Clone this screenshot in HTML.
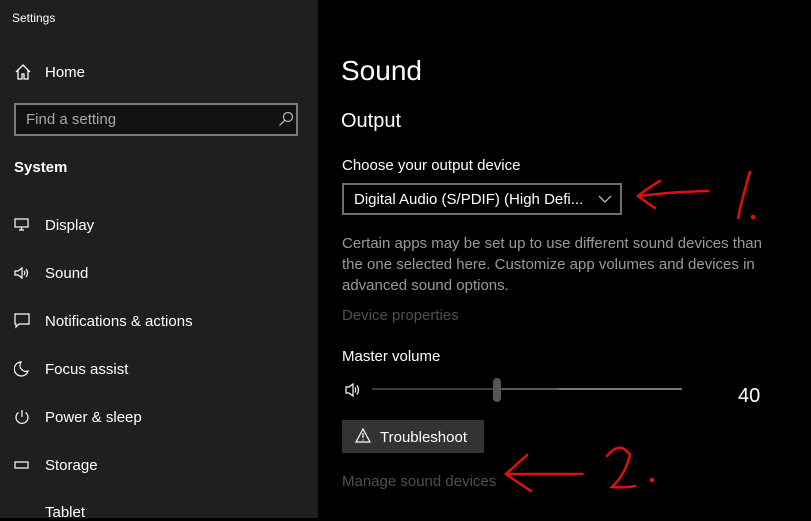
<!DOCTYPE html>
<html><head><meta charset="utf-8"><style>
body{margin:0;width:811px;height:518px;overflow:hidden;background:#000;font-family:"Liberation Sans",sans-serif;color:#fff;position:relative}
.side{position:absolute;left:0;top:0;width:318px;height:518px;background:#1f1f1f}
.t{position:absolute;white-space:nowrap}
.nav{font-size:15px;left:45px}
.ic{position:absolute;left:14px}
</style></head><body>
<div class="side">
<div class="t" style="left:12px;top:11px;font-size:12px">Settings</div>
<svg class="ic" style="top:63px" width="18" height="18" viewBox="0 0 18 18" fill="none" stroke="#fff" stroke-width="1.3"><path d="M2 9 L9 2 L16 9 M4 7 V16 H8 V11 H10 V16 H14 V7"/></svg>
<div class="t nav" style="top:64px">Home</div>
<div style="position:absolute;left:14px;top:103px;width:284px;height:33px;border:2px solid #7a7a7a;box-sizing:border-box;background:#121212"></div>
<div class="t" style="left:26px;top:111px;font-size:15px;color:#a8a8a8">Find a setting</div>
<svg style="position:absolute;left:278px;top:111px" width="16" height="16" viewBox="0 0 16 16" fill="none" stroke="#bbb" stroke-width="1.2"><circle cx="10" cy="6" r="4.5"/><path d="M6.8 9.2 L1.5 14.5"/></svg>
<div class="t" style="left:14px;top:159px;font-size:15px;font-weight:bold">System</div>
<svg class="ic" style="top:218px" width="16" height="14" viewBox="0 0 16 14" fill="none" stroke="#fff" stroke-width="1.2"><rect x="1" y="1" width="13" height="8"/><path d="M7.5 9v3M5 12h5"/></svg>
<div class="t nav" style="top:217px">Display</div>
<svg class="ic" style="top:265px" width="16" height="16" viewBox="0 0 16 16" fill="none" stroke="#fff" stroke-width="1.2"><path d="M1 6h3l4-3v10l-4-3H1z M10 6q1.5 2 0 4 M12 4q3 4 0 8"/></svg>
<div class="t nav" style="top:265px">Sound</div>
<svg class="ic" style="top:313px" width="16" height="16" viewBox="0 0 16 16" fill="none" stroke="#fff" stroke-width="1.2"><path d="M1 1h14v10H5l-3 3V11H1z"/></svg>
<div class="t nav" style="top:313px">Notifications &amp; actions</div>
<svg class="ic" style="top:361px" width="16" height="16" viewBox="0 0 16 16" fill="none" stroke="#fff" stroke-width="1.2"><path d="M7 1a7 7 0 1 0 7 9A6 6 0 0 1 7 1z"/></svg>
<div class="t nav" style="top:361px">Focus assist</div>
<svg class="ic" style="top:409px" width="16" height="16" viewBox="0 0 16 16" fill="none" stroke="#fff" stroke-width="1.2"><path d="M8 1v7 M4.5 3.5a6 6 0 1 0 7 0"/></svg>
<div class="t nav" style="top:409px">Power &amp; sleep</div>
<svg class="ic" style="top:459px" width="16" height="12" viewBox="0 0 16 12" fill="none" stroke="#fff" stroke-width="1.2"><rect x="1" y="3" width="13" height="6"/></svg>
<div class="t nav" style="top:457px">Storage</div>
<div class="t nav" style="top:504px">Tablet</div>
</div>
<div class="t" style="left:341px;top:55px;font-size:28px">Sound</div>
<div class="t" style="left:341px;top:110px;font-size:20px">Output</div>
<div class="t" style="left:342px;top:157px;font-size:15px">Choose your output device</div>
<div style="position:absolute;left:342px;top:183px;width:280px;height:32px;border:2px solid #6e6e6e;box-sizing:border-box"></div>
<div class="t" style="left:354px;top:191px;font-size:15px">Digital Audio (S/PDIF) (High Defi...</div>
<svg style="position:absolute;left:598px;top:194px" width="14" height="10" viewBox="0 0 14 10" fill="none" stroke="#ccc" stroke-width="1.2"><path d="M1 2l6 6 6-6"/></svg>
<div class="t" style="left:342px;top:233px;font-size:15px;line-height:21px;color:#9a9a9a;white-space:normal;width:438px">Certain apps may be set up to use different sound devices than the one selected here. Customize app volumes and devices in advanced sound options.</div>
<div class="t" style="left:342px;top:307px;font-size:15px;color:#4f4f4f">Device properties</div>
<div class="t" style="left:342px;top:348px;font-size:15px">Master volume</div>
<svg style="position:absolute;left:345px;top:382px" width="18" height="16" viewBox="0 0 18 16" fill="none" stroke="#fff" stroke-width="1.2"><path d="M1 5h3l4-3v12l-4-3H1z M10 5.5q1.5 2.5 0 5 M12 3.5q3 4.5 0 9"/></svg>
<div style="position:absolute;left:372px;top:388px;width:310px;height:2px;background:#7a7a7a"></div>
<div style="position:absolute;left:372px;top:388px;width:125px;height:2px;background:#3a3a3a"></div>
<div style="position:absolute;left:497px;top:388px;width:62px;height:2px;background:#5a5a5a"></div>
<div style="position:absolute;left:493px;top:378px;width:8px;height:24px;border-radius:4px;background:#555"></div>
<div class="t" style="left:738px;top:385px;font-size:20px">40</div>
<div style="position:absolute;left:342px;top:420px;width:142px;height:33px;background:#333"></div>
<svg style="position:absolute;left:355px;top:428px" width="16" height="15" viewBox="0 0 16 15" fill="none" stroke="#fff" stroke-width="1.2"><path d="M8 1L1 14h14z M8 5v5 M8 11.5v1"/></svg>
<div class="t" style="left:380px;top:429px;font-size:15px">Troubleshoot</div>
<div class="t" style="left:342px;top:473px;font-size:15px;color:#4f4f4f">Manage sound devices</div>
<svg style="position:absolute;left:0;top:0" width="811" height="518" fill="none" stroke="#e01010" stroke-width="2.5" stroke-linecap="round">
<path d="M708 191 Q670 192 640 196 M660 181 Q645 190 638 196 Q650 205 655 208"/>
<path d="M750 172 Q743 195 738 218"/><circle cx="753" cy="217" r="1" fill="#e01010"/>
<path d="M582 474 L507 474 M527 455 Q515 466 506 474 Q518 483 531 491"/>
<path d="M607 456 Q620 440 630 455 Q625 475 612 487 Q625 488 635 486"/><circle cx="652" cy="480" r="1" fill="#e01010"/>
</svg>
</body></html>
